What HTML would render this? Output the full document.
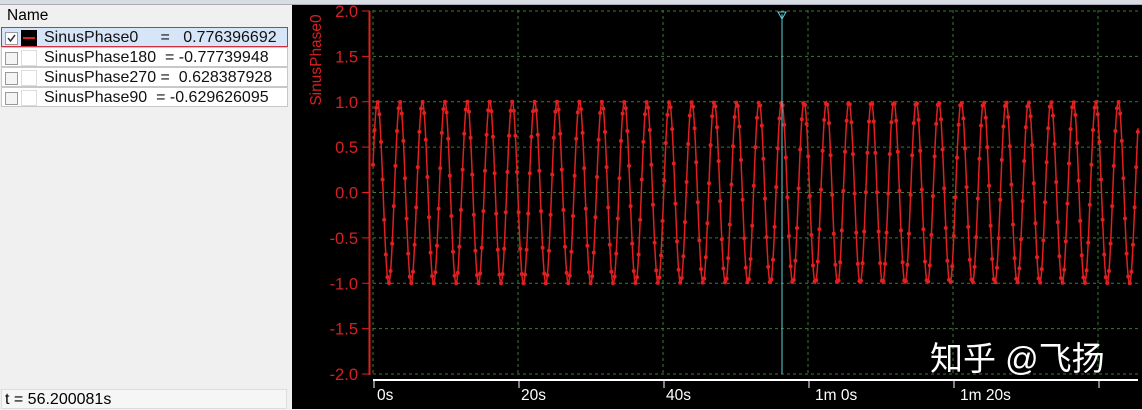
<!DOCTYPE html><html><head><meta charset="utf-8"><style>
body{margin:0;width:1142px;height:409px;overflow:hidden;background:#f0f0f0;font-family:"Liberation Sans",Arial,sans-serif;position:relative}
.top{position:absolute;left:0;top:0;width:1142px;height:4px;background:#d8dde3;border-bottom:1px solid #aab}
.left{position:absolute;left:0;top:5px;width:288px;height:404px;background:#f0f0f0}
.hdr{position:absolute;left:7px;top:2px;font-size:15.5px}
.row{position:absolute;left:1px;width:287px;border:1px solid #c8c8c8;font-size:16px;line-height:19px;background:#fff;box-sizing:border-box;height:20px}
.row .cb{position:absolute;left:3px;top:4px;width:11px;height:11px;border:1px solid #999;background:#f4f4f4}
.row .sw{position:absolute;left:19px;top:2px;width:14px;height:14px;border:1px solid #ddd;background:#fff}
.row .t{position:absolute;left:42px;top:0;white-space:pre;color:#111}
.sel{background:#d6e6f8;border:1px solid #d03040}
.status{position:absolute;left:1px;top:389px;width:286px;height:20px;background:#f6f6f6;border:1px solid #ddd;font-size:16px;line-height:20px;padding-left:3px;box-sizing:border-box}
.plot{position:absolute;left:292px;top:5px;width:850px;height:404px;background:#000}
</style></head><body>
<div class="top"></div>
<div class="left">
<div class="hdr">Name</div>
<div class="row sel" style="top:22px"><div class="cb" style="background:#fff">
<svg width="11" height="11" style="position:absolute;left:0;top:0"><path d="M2 5 L4.5 8 L9 2" stroke="#333" stroke-width="1.5" fill="none"/></svg></div><div class="sw" style="background:#000;border-color:#000"><div style="position:absolute;left:1px;top:6px;width:12px;height:2px;background:#e02020"></div></div><div class="t">SinusPhase0     =   0.776396692</div></div>
<div class="row" style="top:42px"><div class="cb"></div><div class="sw"></div><div class="t">SinusPhase180  = -0.77739948</div></div>
<div class="row" style="top:62px"><div class="cb"></div><div class="sw"></div><div class="t">SinusPhase270 =  0.628387928</div></div>
<div class="row" style="top:82px"><div class="cb"></div><div class="sw"></div><div class="t">SinusPhase90  = -0.629626095</div></div>
</div>
<div class="status">t = 56.200081s</div>
<div class="plot"></div>
<svg id="s" width="1142" height="409" style="position:absolute;left:0;top:0" font-family="Liberation Sans,Arial,sans-serif">
<text transform="translate(321,60) rotate(-90)" text-anchor="middle" fill="#d82020" font-size="15.5">SinusPhase0</text>
<g id="g"></g>
<g fill="#fff" font-size="15.5">
<text x="377" y="400">0s</text><text x="521" y="400">20s</text><text x="666" y="400">40s</text><text x="815" y="400">1m 0s</text><text x="960" y="400">1m 20s</text>
</g>
<text x="930" y="370" fill="#fff" font-size="33" font-family="Liberation Sans,Noto Sans CJK SC,sans-serif">知乎 @飞扬</text>
</svg>
<script>
var g=document.getElementById('g'),h='';
function Y(v){return 192.5-v*90.75}
for(var v=-2;v<=2.001;v+=0.5){h+='<line x1="373" x2="1138" y1="'+Y(v)+'" y2="'+Y(v)+'" stroke="#3a7a3a" stroke-dasharray="3,3"/>';}
var xs=[373,518,663,808,953,1098];
xs.forEach(function(x){h+='<line x1="'+x+'" x2="'+x+'" y1="10" y2="375" stroke="#3a7a3a" stroke-dasharray="3,3"/>';});
h+='<line x1="369.5" x2="369.5" y1="11" y2="375" stroke="#e02020" stroke-width="2"/>';
for(var v=-2;v<=2.001;v+=0.5){h+='<line x1="362" x2="370" y1="'+Y(v)+'" y2="'+Y(v)+'" stroke="#e02020"/>';
var lab=(v<0?'-':'')+Math.abs(v).toFixed(1);
h+='<text x="358" y="'+(Y(v)+6)+'" text-anchor="end" fill="#d82020" font-size="16.5">'+lab+'</text>';}
h+='<line x1="373" x2="1138" y1="380" y2="380" stroke="#fff" stroke-width="2"/>';
xs.forEach(function(x){h+='<line x1="'+(x+1)+'" x2="'+(x+1)+'" y1="380" y2="388" stroke="#fff"/>';});
var P=22.45,x0=377.5,pts=[],dots='';
for(var x=373;x<=1138;x+=0.5){var v=Math.cos(2*Math.PI*(x-x0)/P);pts.push(x+','+Y(v).toFixed(1));}
h+='<polyline points="'+pts.join(' ')+'" fill="none" stroke="#e02020" stroke-width="1.5"/>';
for(var x=373;x<=1138;x+=1.6){var v=Math.cos(2*Math.PI*(x-x0)/P);dots+='<circle cx="'+x.toFixed(1)+'" cy="'+Y(v).toFixed(1)+'" r="2"/>';}
h+='<g fill="#e02020">'+dots+'</g>';
h+='<line x1="782" x2="782" y1="14" y2="374" stroke="#5fd0d8"/><path d="M778 12 L786 12 L782 19 Z" fill="none" stroke="#5fd0d8"/>';
g.innerHTML=h;
</script>
</body></html>
